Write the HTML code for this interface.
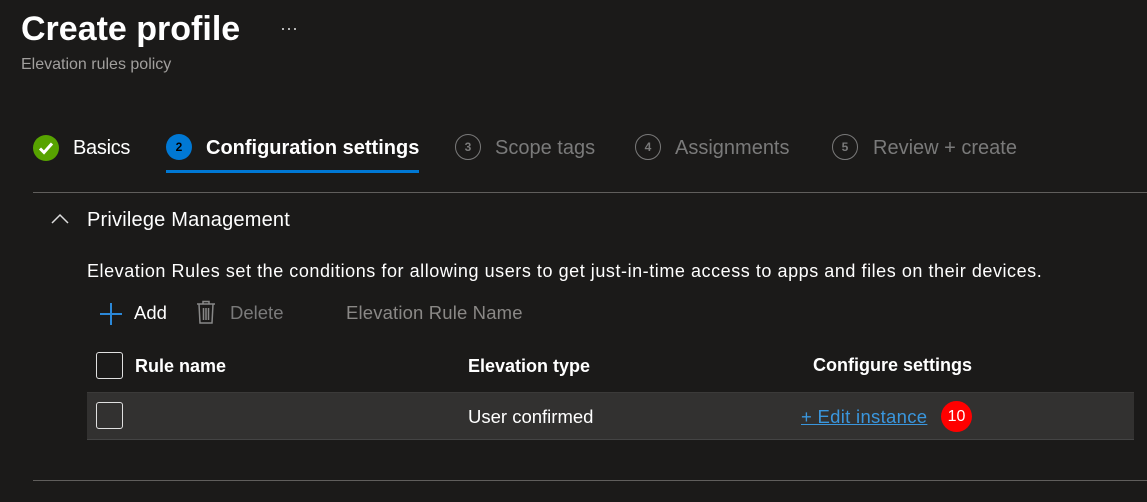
<!DOCTYPE html>
<html><head><meta charset="utf-8"><style>
*{margin:0;padding:0;box-sizing:border-box}
body{width:1147px;height:502px;background:#1b1a19;font-family:"Liberation Sans",sans-serif;color:#fff;position:relative;overflow:hidden}
.a{position:absolute;white-space:nowrap}
.circ{position:absolute;width:26px;height:26px;border-radius:50%;font-size:12px;font-weight:bold;text-align:center;line-height:24px}
.g{color:#7a7a7a}
.cb{position:absolute;width:27px;height:27px;border:1.5px solid #e0e0e0;border-radius:3px}
</style></head><body>
<div class="a" style="left:21px;top:10px;font-size:34px;font-weight:bold;letter-spacing:0px">Create profile</div>
<div class="a" style="left:280px;top:18px;font-size:18px;color:#ccc">···</div>
<div class="a" style="left:21px;top:56px;font-size:16px;color:#a19f9d">Elevation rules policy</div>

<div class="circ" style="left:33px;top:135px;background:#57a300;line-height:26px"><svg width="26" height="26" viewBox="0 0 26 26"><path d="M7 13.5l4 4 8-9" stroke="#fff" stroke-width="3" fill="none"/></svg></div>
<div class="a" style="left:73px;top:137px;font-size:20px;letter-spacing:-0.3px">Basics</div>
<div class="circ" style="left:166px;top:134px;background:#0078d4;color:#000;line-height:26px">2</div>
<div class="a" style="left:206px;top:137px;font-size:20px;font-weight:bold">Configuration settings</div>
<div style="position:absolute;left:166px;top:170px;width:253px;height:3px;background:#0078d4"></div>
<div class="circ g" style="left:455px;top:134px;border:1.5px solid #7a7a7a">3</div>
<div class="a g" style="left:495px;top:137px;font-size:20px">Scope tags</div>
<div class="circ g" style="left:635px;top:134px;border:1.5px solid #7a7a7a">4</div>
<div class="a g" style="left:675px;top:137px;font-size:20px">Assignments</div>
<div class="circ g" style="left:832px;top:134px;border:1.5px solid #7a7a7a">5</div>
<div class="a g" style="left:873px;top:137px;font-size:20px">Review + create</div>
<div style="position:absolute;left:33px;top:192px;width:1114px;height:1px;background:#605e5c"></div>

<svg class="a" style="left:50px;top:212px" width="20" height="14"><path d="M2 11l8-8 8 8" stroke="#ddd" stroke-width="1.5" fill="none"/></svg>
<div class="a" style="left:87px;top:209px;font-size:20px;letter-spacing:0.2px">Privilege Management</div>
<div class="a" style="left:87px;top:261px;font-size:18px;letter-spacing:0.55px">Elevation Rules set the conditions for allowing users to get just-in-time access to apps and files on their devices.</div>

<svg class="a" style="left:99px;top:302px" width="24" height="24"><path d="M12 1v22M1 12h22" stroke="#2b88d8" stroke-width="2"/></svg>
<div class="a" style="left:134px;top:302px;font-size:18.5px">Add</div>
<svg class="a" style="left:195px;top:300px" width="22" height="25"><path d="M2 4h18M8 4V1.5h6V4M4 4l1 19h12l1-19M8.5 8v12M11 8v12M13.5 8v12" stroke="#888" stroke-width="1.5" fill="none"/></svg>
<div class="a g" style="left:230px;top:302px;font-size:18.5px">Delete</div>
<div class="a g" style="left:346px;top:302px;font-size:18.5px;color:#8a8886;letter-spacing:0.15px">Elevation Rule Name</div>

<div class="cb" style="left:96px;top:352px"></div>
<div class="a" style="left:135px;top:356px;font-size:18px;font-weight:bold">Rule name</div>
<div class="a" style="left:468px;top:356px;font-size:18px;font-weight:bold">Elevation type</div>
<div class="a" style="left:813px;top:355px;font-size:18px;font-weight:bold">Configure settings</div>

<div style="position:absolute;left:87px;top:392px;width:1047px;height:48px;background:#323130;border-top:1px solid #3b3a39;border-bottom:1px solid #444"></div>
<div class="cb" style="left:96px;top:402px"></div>
<div class="a" style="left:468px;top:406px;font-size:18.5px">User confirmed</div>
<div class="a" style="left:801px;top:406px;font-size:18.5px;color:#3a96dd;text-decoration:underline;letter-spacing:0.3px">+ Edit instance</div>
<div class="a" style="left:941px;top:401px;width:31px;height:31px;border-radius:50%;background:#f00;font-size:16px;text-align:center;line-height:31px">10</div>
<div style="position:absolute;left:33px;top:480px;width:1114px;height:1px;background:#605e5c"></div>
</body></html>
